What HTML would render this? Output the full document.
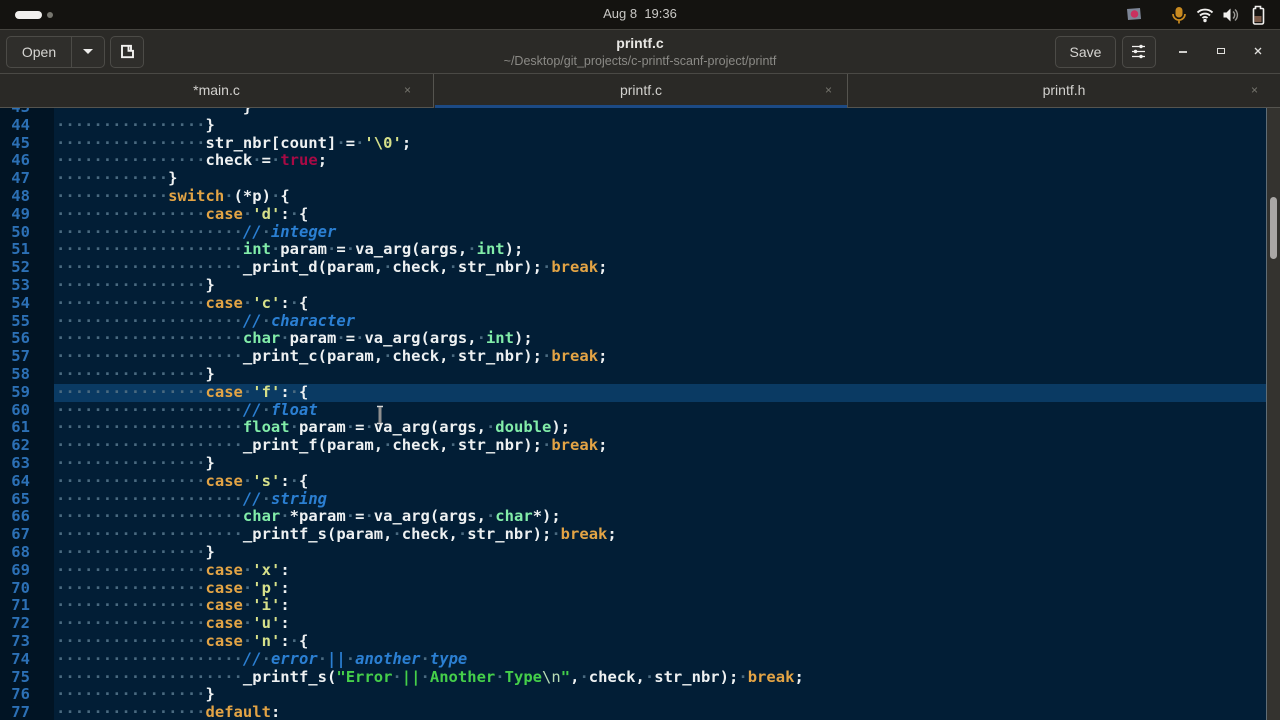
<!DOCTYPE html>
<html><head><meta charset="utf-8">
<style>
*{box-sizing:border-box}
html,body{margin:0;width:1280px;height:720px;overflow:hidden;background:#2b2a27;font-family:"Liberation Sans",sans-serif}
.abs{position:absolute}
#top{left:0;top:0;width:1280px;height:30px;background:#141310;border-bottom:1px solid #45443f}
#clock{left:0;width:1280px;top:6px;text-align:center;color:#c9c8c5;font-size:13px;line-height:16px}
#hdr{left:0;top:30px;width:1280px;height:44px;background:#2b2a27;border-bottom:1px solid #4a4945}
.btn{position:absolute;top:36px;height:32px;border:1px solid #4c4b47;border-radius:5px;background:#2f2e2b;color:#d6d5d2;font-size:14px;line-height:30px;text-align:center}
#tabs{left:0;top:74px;width:1280px;height:34px;background:#2a2926;color:#d2d1ce;font-size:14px}
.tab{position:absolute;top:0;height:34px;line-height:33px;text-align:center;border-bottom:1px solid #55544f}
.x{position:absolute;top:0;line-height:33px;font-size:12px;color:#77766f}
#ed{left:0;top:108px;width:1266px;height:612px;background:#021e36;overflow:hidden}
#gut{position:absolute;left:0;top:0;width:54px;height:612px;background:#011424}
#hl{position:absolute;left:54px;top:276px;width:1212px;height:18px;background:#0a3a63}
#code{position:absolute;left:0;top:-9px;font:bold 15.5px/17.81px "DejaVu Sans Mono",monospace;letter-spacing:.012px;color:#eef1f2}
.l{height:17.81px;position:relative;padding-left:56px;white-space:pre}
.l n{position:absolute;left:0;width:30px;text-align:right;color:#2c70b5}
s{text-decoration:none;color:#4a6a80;font-style:normal}
u{text-decoration:none;color:#e3a445}
em{color:#2b7fd2}
b{color:#82eda9}
mark{background:none;color:#d6e08a}
mark.n{color:#b9dcb6;font-weight:normal}
tt{font:inherit;color:#45cf4a}
var{font-style:normal;color:#a80a45}
#side{left:1266px;top:108px;width:14px;height:612px;background:#34332f;border-left:1px solid #5f6d76}
#thumb{left:1270px;top:197px;width:7px;height:62px;border-radius:4px;background:#a9a7a5}
</style></head><body>
<div class="abs" id="top"></div>
<div class="abs" style="left:15px;top:11px;width:27px;height:8px;border-radius:4px;background:#f1f0ee"></div>
<div class="abs" style="left:47px;top:12px;width:6px;height:6px;border-radius:3px;background:#77766f"></div>
<div class="abs" id="clock">Aug 8&nbsp; 19:36</div>
<svg class="abs" style="left:1124px;top:6px" width="20" height="18" viewBox="0 0 20 18"><path d="M3 3l13-1 1 11-13 1z" fill="#7d8596"/><circle cx="10.500" cy="8" r="3.800" fill="#c9305f"/></svg>
<svg class="abs" style="left:1170px;top:6px" width="18" height="18" viewBox="0 0 18 18"><rect x="5.500" y="1" width="7" height="10.500" rx="3.500" fill="#c98a20"/><path d="M3 8a6 6 0 0 0 12 0M9 14v3.500" fill="none" stroke="#c98a20" stroke-width="1.700"/></svg>
<svg class="abs" style="left:1196px;top:6px" width="18" height="18" viewBox="0 0 18 18"><path d="M1.500 6.500a11 11 0 0 1 15 0M4 9.500a7.500 7.500 0 0 1 10 0M6.500 12a3.500 3.500 0 0 1 5 0" fill="none" stroke="#f1f0ee" stroke-width="1.900"/><circle cx="9" cy="14.500" r="1.700" fill="#f1f0ee"/></svg>
<svg class="abs" style="left:1222px;top:6px" width="18" height="18" viewBox="0 0 18 18"><path d="M1.500 6.500h3l4-4v13l-4-4h-3z" fill="#f1f0ee"/><path d="M11 5.500a4.500 4.500 0 0 1 0 7M13 3.500a7.500 7.500 0 0 1 0 11" fill="none" stroke="#9a9995" stroke-width="1.400"/></svg>
<svg class="abs" style="left:1249px;top:5px" width="18" height="20" viewBox="0 0 18 20"><path d="M6.500 1.500h5v2h2a1 1 0 0 1 1 1v13a1.500 1.500 0 0 1-1.500 1.500h-7a1.500 1.500 0 0 1-1.500-1.500v-13a1 1 0 0 1 1-1h1z" fill="#141310" stroke="#f1f0ee" stroke-width="1.600"/><rect x="5.500" y="11" width="7" height="6" fill="#7a5a48"/></svg>

<div class="abs" id="hdr"></div>
<div class="btn" style="left:6px;width:66px;border-radius:5px 0 0 5px">Open</div>
<div class="btn" style="left:71px;width:34px;border-radius:0 5px 5px 0"></div>
<div class="abs" style="left:83px;top:49px;width:0;height:0;border-left:5px solid transparent;border-right:5px solid transparent;border-top:5px solid #eeedeb"></div>
<div class="btn" style="left:110px;width:34px"></div>
<svg class="abs" style="left:120px;top:44px" width="15" height="15" viewBox="0 0 15 15"><path d="M2 1.800h6.500v5H13v6.400H2z M8.500 1.800H11v5" fill="none" stroke="#f4f3f1" stroke-width="1.900"/></svg>
<div class="abs" style="left:0;width:1280px;top:35px;text-align:center;color:#e8e7e4;font-size:14px;font-weight:bold;line-height:16px">printf.c</div>
<div class="abs" style="left:0;width:1280px;top:53px;text-align:center;color:#8b8a86;font-size:12.500px;line-height:16px">~/Desktop/git_projects/c-printf-scanf-project/printf</div>
<div class="btn" style="left:1055px;width:61px">Save</div>
<div class="btn" style="left:1122px;width:34px"></div>
<svg class="abs" style="left:1131px;top:44px" width="15" height="15" viewBox="0 0 15 15"><path d="M1 2.500h13M1 7.500h13M1 12.500h13" stroke="#f1f0ee" stroke-width="1.300"/><circle cx="10" cy="2.500" r="1.700" fill="#f1f0ee"/><circle cx="4.500" cy="7.500" r="1.700" fill="#f1f0ee"/><circle cx="10" cy="12.500" r="1.700" fill="#f1f0ee"/></svg>
<div class="abs" style="left:1179px;top:51px;width:8px;height:1.500px;background:#d0cfcc"></div>
<div class="abs" style="left:1217px;top:48px;width:8px;height:6px;border:1.500px solid #e0dfdc"></div>
<svg class="abs" style="left:1254px;top:47px" width="8" height="8" viewBox="0 0 8 8"><path d="M1 1l6 6M7 1l-6 6" stroke="#e0dfdc" stroke-width="1.300"/></svg>

<div class="abs" id="tabs">
<div class="tab" style="left:0;width:434px;border-right:1px solid #55544f">*main.c<span class="x" style="left:404px">×</span></div>
<div class="tab" style="left:435px;width:412px;border-bottom:3px solid #1c4a85;height:34px;line-height:33px">printf.c<span class="x" style="left:390px">×</span></div>
<div class="tab" style="left:847px;width:433px;border-left:1px solid #55544f">printf.h<span class="x" style="left:403px">×</span></div>
</div>

<div class="abs" id="ed">
<div id="gut"></div>
<div id="hl"></div>
<div id="code"><div class="l"><n>43</n><s>····················</s>}</div><div class="l"><n>44</n><s>················</s>}</div><div class="l"><n>45</n><s>················</s>str_nbr[count]<s>·</s>=<s>·</s><mark>'\0'</mark>;</div><div class="l"><n>46</n><s>················</s>check<s>·</s>=<s>·</s><var>true</var>;</div><div class="l"><n>47</n><s>············</s>}</div><div class="l"><n>48</n><s>············</s><u>switch</u><s>·</s>(*p)<s>·</s>{</div><div class="l"><n>49</n><s>················</s><u>case</u><s>·</s><mark>'d'</mark>:<s>·</s>{</div><div class="l"><n>50</n><s>····················</s><em>//<s>·</s>integer</em></div><div class="l"><n>51</n><s>····················</s><b>int</b><s>·</s>param<s>·</s>=<s>·</s>va_arg(args,<s>·</s><b>int</b>);</div><div class="l"><n>52</n><s>····················</s>_print_d(param,<s>·</s>check,<s>·</s>str_nbr);<s>·</s><u>break</u>;</div><div class="l"><n>53</n><s>················</s>}</div><div class="l"><n>54</n><s>················</s><u>case</u><s>·</s><mark>'c'</mark>:<s>·</s>{</div><div class="l"><n>55</n><s>····················</s><em>//<s>·</s>character</em></div><div class="l"><n>56</n><s>····················</s><b>char</b><s>·</s>param<s>·</s>=<s>·</s>va_arg(args,<s>·</s><b>int</b>);</div><div class="l"><n>57</n><s>····················</s>_print_c(param,<s>·</s>check,<s>·</s>str_nbr);<s>·</s><u>break</u>;</div><div class="l"><n>58</n><s>················</s>}</div><div class="l"><n>59</n><s>················</s><u>case</u><s>·</s><mark>'f'</mark>:<s>·</s>{</div><div class="l"><n>60</n><s>····················</s><em>//<s>·</s>float</em></div><div class="l"><n>61</n><s>····················</s><b>float</b><s>·</s>param<s>·</s>=<s>·</s>va_arg(args,<s>·</s><b>double</b>);</div><div class="l"><n>62</n><s>····················</s>_print_f(param,<s>·</s>check,<s>·</s>str_nbr);<s>·</s><u>break</u>;</div><div class="l"><n>63</n><s>················</s>}</div><div class="l"><n>64</n><s>················</s><u>case</u><s>·</s><mark>'s'</mark>:<s>·</s>{</div><div class="l"><n>65</n><s>····················</s><em>//<s>·</s>string</em></div><div class="l"><n>66</n><s>····················</s><b>char</b><s>·</s>*param<s>·</s>=<s>·</s>va_arg(args,<s>·</s><b>char</b>*);</div><div class="l"><n>67</n><s>····················</s>_printf_s(param,<s>·</s>check,<s>·</s>str_nbr);<s>·</s><u>break</u>;</div><div class="l"><n>68</n><s>················</s>}</div><div class="l"><n>69</n><s>················</s><u>case</u><s>·</s><mark>'x'</mark>:</div><div class="l"><n>70</n><s>················</s><u>case</u><s>·</s><mark>'p'</mark>:</div><div class="l"><n>71</n><s>················</s><u>case</u><s>·</s><mark>'i'</mark>:</div><div class="l"><n>72</n><s>················</s><u>case</u><s>·</s><mark>'u'</mark>:</div><div class="l"><n>73</n><s>················</s><u>case</u><s>·</s><mark>'n'</mark>:<s>·</s>{</div><div class="l"><n>74</n><s>····················</s><em>//<s>·</s>error<s>·</s>||<s>·</s>another<s>·</s>type</em></div><div class="l"><n>75</n><s>····················</s>_printf_s(<tt>"Error<s>·</s>||<s>·</s>Another<s>·</s>Type</tt><mark class="n">\n</mark><tt>"</tt>,<s>·</s>check,<s>·</s>str_nbr);<s>·</s><u>break</u>;</div><div class="l"><n>76</n><s>················</s>}</div><div class="l"><n>77</n><s>················</s><u>default</u>:</div></div>
</div>
<div class="abs" id="side"></div>
<div class="abs" id="thumb"></div>
<svg class="abs" style="left:375px;top:405px" width="10" height="20" viewBox="0 0 10 20"><path d="M2 1.500h6M2 18.500h6" stroke="#d8d8d8" stroke-width="1.500"/><rect x="3.500" y="2" width="3" height="16" fill="#8f8f8f"/></svg>
</body></html>
